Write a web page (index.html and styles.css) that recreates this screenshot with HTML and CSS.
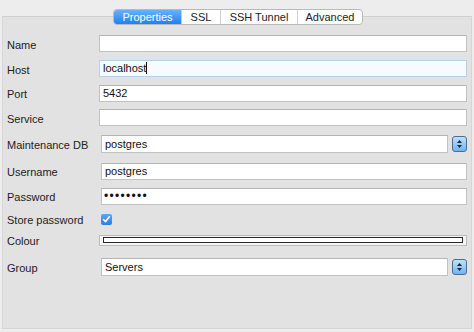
FILE: index.html
```html
<html lang="en">
<head>
    <meta charset="UTF-8">
    <title>Server properties</title>
    <link rel="stylesheet" href="styles.css">
</head>
<body>
    <div class="window">
        <div class="tabs">
            <span class="tab active">Properties</span>
            <span class="tab">SSL</span>
            <span class="tab">SSH Tunnel</span>
            <span class="tab">Advanced</span>
        </div>
        <div class="panel">
            <div class="row r_name">
                <label>Name</label>
                <div class="field"></div>
            </div>
            <div class="row r_host">
                <label>Host</label>
                <div class="field focus">localhost<span class="caret"></span></div>
            </div>
            <div class="row r_port">
                <label>Port</label>
                <div class="field">5432</div>
            </div>
            <div class="row r_service">
                <label>Service</label>
                <div class="field"></div>
            </div>
            <div class="row r_mdb">
                <label>Maintenance DB</label>
                <div class="combo">
                    <div class="field wide">postgres</div>
                    <span class="spinner">
                        <svg width="7" height="10" viewBox="0 0 7 10"><path d="M3.5 1 L6 4 L1 4 Z M3.5 9 L6 6 L1 6 Z" fill="#1b2a3a"/></svg>
                    </span>
                </div>
            </div>
            <div class="row r_user">
                <label>Username</label>
                <div class="field inset">postgres</div>
            </div>
            <div class="row r_pass">
                <label>Password</label>
                <div class="field inset dots">&bull;&bull;&bull;&bull;&bull;&bull;&bull;&bull;</div>
            </div>
            <div class="row r_store">
                <label>Store password</label>
                <span class="check">
                    <svg width="9" height="8" viewBox="0 0 9 8"><path d="M1.2 4.2 L3.5 6.5 L7.8 1.2" fill="none" stroke="#fff" stroke-width="1.6"/></svg>
                </span>
            </div>
            <div class="row r_colour">
                <label>Colour</label>
                <div class="colour"><div class="swatch"></div></div>
            </div>
            <div class="row r_group">
                <label>Group</label>
                <div class="combo">
                    <div class="field wide tall">Servers</div>
                    <span class="spinner">
                        <svg width="7" height="10" viewBox="0 0 7 10"><path d="M3.5 1 L6 4 L1 4 Z M3.5 9 L6 6 L1 6 Z" fill="#1b2a3a"/></svg>
                    </span>
                </div>
            </div>
        </div>
    </div>
</body>
</html>
```

FILE: styles.css
```css
body {
    margin: 0;
    width: 474px;
    height: 332px;
    background-color: #ededed;
    font-family: "Liberation Sans", Arial, sans-serif;
    font-size: 11px;
    color: #1c1c1c;
    overflow: hidden;
}
.window {
    position: relative;
    height: 332px;
    padding-top: 16px;
    box-sizing: border-box;
}
.tabs {
    position: absolute;
    top: 9px;
    left: 113px;
    display: flex;
    height: 16px;
    background-color: #fff;
    border: 1px solid #b9b9b9;
    border-radius: 4px;
    box-sizing: border-box;
    overflow: hidden;
    z-index: 2;
}
.tab {
    display: flex;
    align-items: center;
    justify-content: center;
    height: 14px;
    border-left: 1px solid #d0d0d0;
    color: #222;
}
.tab:first-child {
    border-left: none;
}
.tab.active {
    width: 67px;
    color: #fff;
    background: linear-gradient(#69b1fb, #1c80f6);
}
.tab:nth-child(2) { width: 38px; }
.tab:nth-child(3) { width: 76px; }
.tab:nth-child(4) { width: 64px; }
.panel {
    margin: 0 2px 0 2px;
    height: 313px;
    background-color: #e2e2e2;
    border-top: 1px solid #cfcfcf;
    border-left: 1px solid #d6d6d6;
    border-right: 1px solid #d6d6d6;
    border-bottom: 1px solid #d6d6d6;
    padding-top: 14px;
    box-sizing: border-box;
}
.row {
    display: flex;
    align-items: center;
}
.row label {
    width: 92px;
    padding-left: 4px;
    flex-shrink: 0;
    padding-top: 2px;
}
.r_name, .r_host, .r_service { height: 25px; }
.r_port { height: 24px; }
.r_mdb { height: 28px; }
.r_user { height: 26px; }
.r_pass { height: 24px; }
.r_store { height: 22px; }
.r_colour { height: 20px; }
.r_group { height: 34px; }
.field {
    width: 368px;
    height: 17px;
    box-sizing: border-box;
    background-color: #fff;
    border: 1px solid #c2c2c2;
    border-top-color: #b4b4b4;
    padding-left: 3px;
    line-height: 15px;
    color: #111;
}
.field.focus {
    background-color: #f6fbff;
    border-color: #b8d0e6;
}
.caret {
    display: inline-block;
    width: 1px;
    height: 12px;
    background-color: #111;
    vertical-align: -2px;
}
.field.inset {
    margin-left: 2px;
    width: 366px;
}
.dots {
    font-size: 12px;
    letter-spacing: 1.3px;
    padding-left: 2px;
}
.combo {
    display: flex;
    align-items: center;
    margin-left: 2px;
    gap: 4px;
}
.field.wide {
    width: 347px;
    height: 18px;
    line-height: 16px;
}
.field.tall {
    height: 18px;
}
.spinner {
    display: flex;
    align-items: center;
    justify-content: center;
    width: 15px;
    height: 16px;
    box-sizing: border-box;
    border: 1px solid #4a6f93;
    border-radius: 3px;
    background: linear-gradient(#bfe0fc, #6fb4f2);
}
.check {
    display: flex;
    align-items: center;
    justify-content: center;
    width: 11px;
    height: 11px;
    margin-left: 2px;
    border-radius: 2px;
    background: linear-gradient(#5aa6f5, #2a7ee8);
}
.colour {
    width: 368px;
    height: 11px;
    box-sizing: border-box;
    border: 1px solid #bcbcbc;
    background-color: #f4f4f4;
    padding: 1px 3px;
}
.swatch {
    height: 6px;
    box-sizing: border-box;
    border: 1px solid #2a2a2a;
    background-color: #fff;
}
```
